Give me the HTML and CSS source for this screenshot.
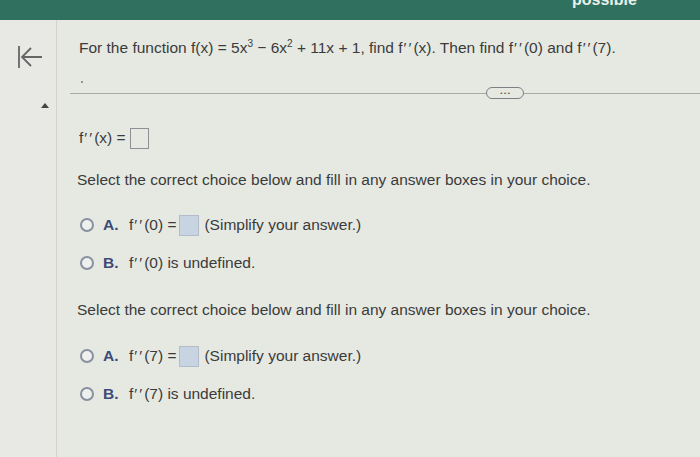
FILE: index.html
```html
<!DOCTYPE html>
<html>
<head>
<meta charset="utf-8">
<link rel="stylesheet" href="styles.css">
</head>
<body>
<div class="topbar"><span class="top-text">possible</span></div>
<div class="main">
  <aside class="sidebar">
    <svg class="back-icon" width="26" height="24" viewBox="0 0 26 24">
      <path d="M2 1 V23" stroke="#666" stroke-width="1.8" fill="none"/>
      <path d="M25 12 H6 M14 3 L5 12 L14 21" stroke="#666" stroke-width="1.8" fill="none"/>
    </svg>
    <span class="tri"></span>
  </aside>
  <section class="content">
    <p class="question">For the function f(x) = 5x<sup>3</sup> − 6x<sup>2</sup> + 11x + 1, find f<span class="pr">′′</span>(x). Then find f<span class="pr">′′</span>(0) and f<span class="pr">′′</span>(7).</p>
    <div class="divider"><span class="dot"></span><span class="pill">• • •</span></div>
    <div class="answer-row"><span>f<span class="pr">′′</span>(x) =</span><span class="box"></span></div>
    <p class="instr instr-1">Select the correct choice below and fill in any answer boxes in your choice.</p>
    <div class="option opt-a1"><span class="radio"></span><span class="letter">A.</span><span>f<span class="pr">′′</span>(0) =</span><span class="box filled"></span><span class="note">(Simplify your answer.)</span></div>
    <div class="option opt-b"><span class="radio"></span><span class="letter">B.</span><span>f<span class="pr">′′</span>(0) is undefined.</span></div>
    <p class="instr instr-2">Select the correct choice below and fill in any answer boxes in your choice.</p>
    <div class="option opt-a2"><span class="radio"></span><span class="letter">A.</span><span>f<span class="pr">′′</span>(7) =</span><span class="box filled"></span><span class="note">(Simplify your answer.)</span></div>
    <div class="option opt-b"><span class="radio"></span><span class="letter">B.</span><span>f<span class="pr">′′</span>(7) is undefined.</span></div>
  </section>
</div>
</body>
</html>
```
FILE: styles.css
```css
html, body {
  margin: 0;
  padding: 0;
}
body {
  width: 700px;
  height: 457px;
  overflow: hidden;
  background: #e6e9e2;
  font-family: "Liberation Sans", Arial, sans-serif;
  color: #3b3b3b;
  font-size: 15.5px;
}
.topbar {
  height: 20px;
  background: #30705f;
  position: relative;
  overflow: hidden;
}
.top-text {
  position: absolute;
  left: 572px;
  top: -9px;
  color: #e8f0ec;
  font-size: 16px;
  line-height: 18px;
  font-weight: bold;
}
.main {
  display: flex;
  height: 437px;
}
.sidebar {
  width: 57px;
  flex: none;
  border-right: 1px solid #d3d4d0;
  background: #e8e8e4;
  display: flex;
  flex-direction: column;
  align-items: flex-start;
  padding-left: 17px;
  box-sizing: border-box;
  padding-top: 25px;
}
.back-icon {
  display: block;
}
.tri {
  margin-top: 34px;
  margin-left: 24px;
  width: 0;
  height: 0;
  border-left: 4px solid transparent;
  border-right: 4px solid transparent;
  border-bottom: 5px solid #444;
}
.content {
  flex: 1;
  padding-left: 22px;
  padding-top: 18px;
}
.question {
  margin: 0;
  line-height: 20px;
  font-size: 15.5px;
  white-space: nowrap;
}
.pr {
  padding-left: 1px;
  letter-spacing: 2px;
}
sup {
  font-size: 10px;
  line-height: 0;
  vertical-align: 6px;
}
.divider {
  margin: 29px 0 0 -9px;
  height: 12px;
  display: flex;
  align-items: center;
  position: relative;
}
.divider::before {
  content: "";
  width: 416px;
  border-top: 1px solid #a9aba8;
}
.divider::after {
  content: "";
  flex: 1;
  border-top: 1px solid #a9aba8;
}
.dot {
  position: absolute;
  left: 11px;
  top: -6px;
  width: 2px;
  height: 2px;
  background: #777;
  border-radius: 1px;
}
.pill {
  width: 38px;
  height: 12px;
  box-sizing: border-box;
  border: 1px solid #7c7f86;
  border-radius: 6px;
  font-size: 6px;
  line-height: 10px;
  text-align: center;
  color: #555;
  font-weight: bold;
}
.answer-row {
  margin-top: 28px;
  height: 22px;
  display: flex;
  align-items: center;
  gap: 4px;
}
.box {
  display: inline-block;
  width: 19px;
  height: 21px;
  box-sizing: border-box;
  border: 1px solid #8e9095;
}
.box.filled {
  width: 20px;
  background: #c9d4e2;
  border-color: #b3bccb;
  margin-left: 3px;
  margin-right: 5px;
}
.instr {
  margin: 0;
  line-height: 20px;
  margin-left: -2px;
}
.instr-1 { margin-top: 21px; }
.instr-2 { margin-top: 26px; }
.option {
  height: 22px;
  display: flex;
  align-items: center;
}
.opt-a1 { margin-top: 24px; }
.opt-a2 { margin-top: 25px; }
.opt-b { margin-top: 16px; }
.radio {
  width: 14px;
  height: 14px;
  box-sizing: border-box;
  border: 2px solid #8990a0;
  border-radius: 50%;
  margin-left: 1px;
  margin-right: 9px;
  background: #eef0ee;
}
.letter {
  width: 26px;
  font-weight: bold;
  color: #3c4a78;
}
.note {
  color: #3b3b3b;
}
```
